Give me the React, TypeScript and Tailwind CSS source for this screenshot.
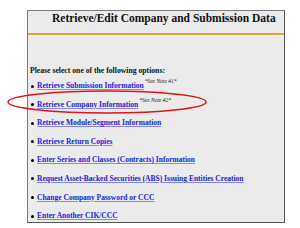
import React from 'react'

const items = [
  { label: 'Retrieve Submission Information', note: '*See Note #1*' },
  { label: 'Retrieve Company Information', note: '*See Note #2*' },
  { label: 'Retrieve Module/Segment Information' },
  { label: 'Retrieve Return Copies' },
  { label: 'Enter Series and Classes (Contracts) Information' },
  { label: 'Request Asset-Backed Securities (ABS) Issuing Entities Creation' },
  { label: 'Change Company Password or CCC' },
  { label: 'Enter Another CIK/CCC' },
]

export default function App() {
  return (
    <div className="relative w-[300px] h-[228px] bg-white overflow-hidden font-['Liberation_Serif','Times_New_Roman',serif]">
      <div className="ml-[27px] mt-[10px] w-[258px] h-[213px] border border-[#7a7a7a] border-r-[#555] border-b-[#555] bg-[#ebebeb]">
        <div className="h-[24px] border-b-2 border-[#d9a640] flex items-center pl-[24px]">
          <h1 className="text-[11.5px] font-bold text-[#111] leading-none mt-[-6px]">
            Retrieve/Edit Company and Submission Data
          </h1>
        </div>
        <div className="pl-[2px] pt-[32px]">
          <p className="text-[7.7px] font-bold text-[#111] leading-[8px]">
            Please select one of the following options:
          </p>
          <ul className="mt-[7px] flex flex-col gap-[10.6px]">
            {items.map((item) => (
              <li key={item.label} className="flex items-center h-[8px]">
                <span className="ml-[1px] w-[3px] h-[3px] rounded-full bg-black mr-[3px]" />
                <a className="text-[7.5px] font-bold text-[#2222dd] underline decoration-[#8888ee] leading-[8px]">
                  {item.label}
                </a>
                {item.note && (
                  <span className="text-[5.5px] italic text-[#222] ml-[1px] self-start mt-[-3px] leading-none">
                    {item.note}
                  </span>
                )}
              </li>
            ))}
          </ul>
        </div>
      </div>
      <svg className="absolute left-0 top-0" width="300" height="228">
        <ellipse cx="107" cy="102" rx="99" ry="11" fill="none" stroke="#e0141a" strokeWidth="1.6" />
      </svg>
    </div>
  )
}
